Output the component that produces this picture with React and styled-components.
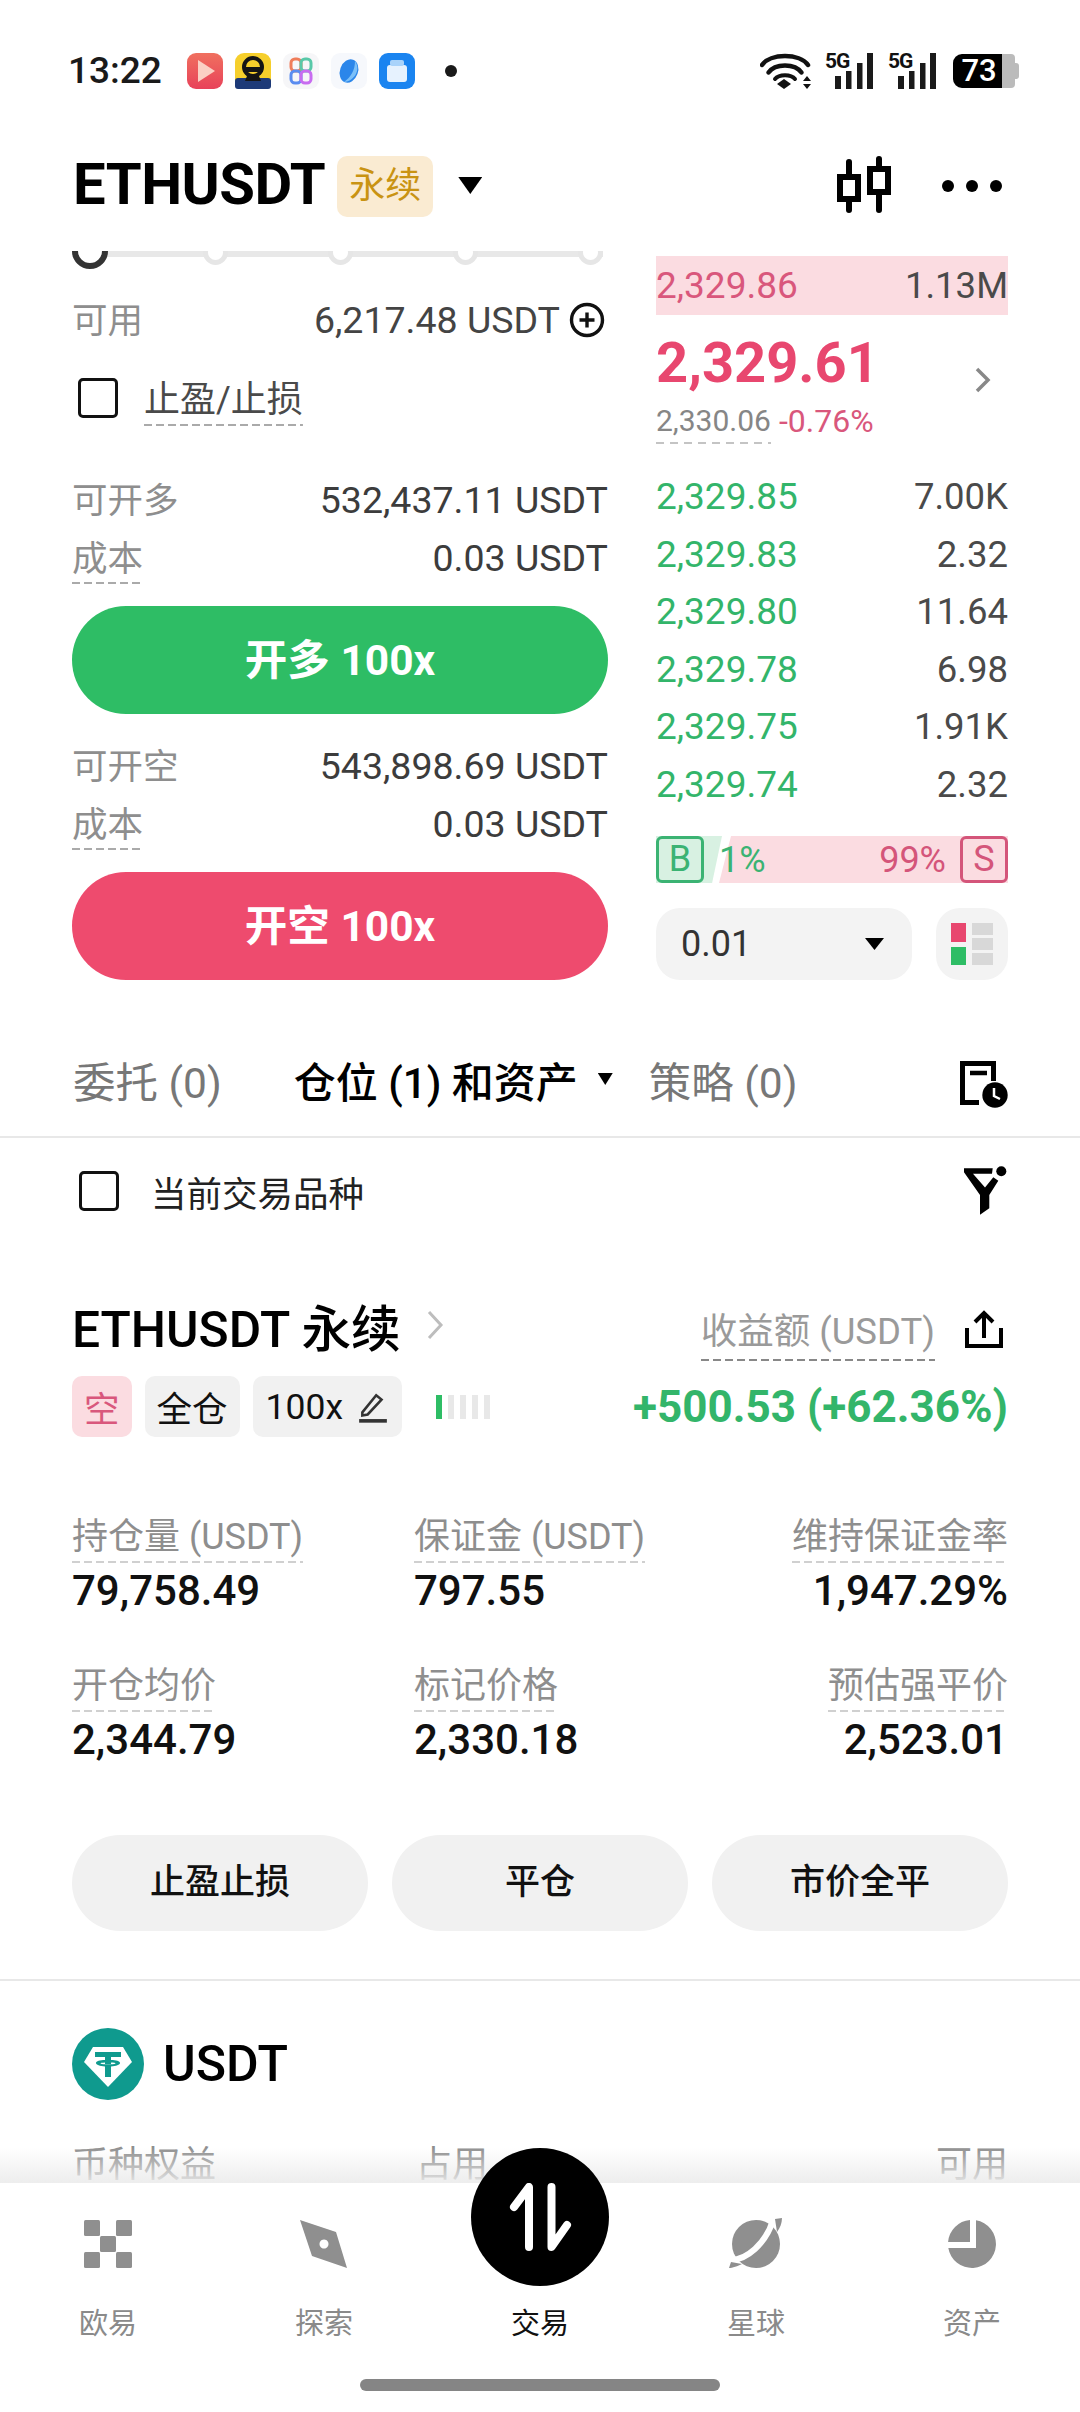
import React from 'react'
import styled, { createGlobalStyle } from 'styled-components'

const RED = '#e8476f'
const GREEN = '#33b56a'

const bids = [
  ['2,329.85', '7.00K'],
  ['2,329.83', '2.32'],
  ['2,329.80', '11.64'],
  ['2,329.78', '6.98'],
  ['2,329.75', '1.91K'],
  ['2,329.74', '2.32']
]

const stats = [
  ['持仓量 (USDT)', '79,758.49'],
  ['保证金 (USDT)', '797.55'],
  ['维持保证金率', '1,947.29%'],
  ['开仓均价', '2,344.79'],
  ['标记价格', '2,330.18'],
  ['预估强平价', '2,523.01']
]

const AppIcons = () => (
  <>
    <svg width="36" height="36" viewBox="0 0 36 36">
      <defs>
        <linearGradient id="play" x1="0" y1="0" x2="0" y2="1">
          <stop offset="0" stopColor="#f0705f" />
          <stop offset="1" stopColor="#e8425a" />
        </linearGradient>
      </defs>
      <rect width="36" height="36" rx="9" fill="url(#play)" />
      <path d="M11 7 L28 18 L11 29 Z" fill="#fbd0c4" />
    </svg>
    <svg width="36" height="36" viewBox="0 0 36 36">
      <rect width="36" height="36" rx="9" fill="#f6cf2c" />
      <rect y="25" width="36" height="11" rx="3" fill="#1d3a78" />
      <circle cx="18" cy="14" r="9" fill="none" stroke="#151515" strokeWidth="4" />
      <rect x="8" y="14" width="20" height="5" fill="#151515" />
      <path d="M10 28 L26 28 L24 23 L12 23 Z" fill="#151515" />
    </svg>
    <svg width="36" height="36" viewBox="0 0 36 36">
      <rect width="36" height="36" rx="9" fill="#f6f6f8" />
      <rect x="8" y="6" width="10" height="12" rx="4" fill="none" stroke="#ef7d5a" strokeWidth="3" />
      <rect x="18" y="6" width="10" height="12" rx="4" fill="none" stroke="#58c8a8" strokeWidth="3" />
      <rect x="8" y="18" width="10" height="12" rx="4" fill="none" stroke="#5a8cf0" strokeWidth="3" />
      <rect x="18" y="18" width="10" height="12" rx="4" fill="none" stroke="#c86cf0" strokeWidth="3" />
    </svg>
    <svg width="36" height="36" viewBox="0 0 36 36">
      <rect width="36" height="36" rx="9" fill="#f6f8fc" />
      <ellipse cx="18" cy="18" rx="9" ry="12" transform="rotate(20 18 18)" fill="#2b86ea" />
      <path d="M24 8 C30 16 24 28 13 29 C20 24 24 17 24 8 Z" fill="#7cc0f8" />
    </svg>
    <svg width="36" height="36" viewBox="0 0 36 36">
      <rect width="36" height="36" rx="9" fill="#1a84f0" />
      <rect x="8" y="12" width="20" height="17" rx="3" fill="#e6f2fe" />
      <rect x="11" y="7" width="14" height="6" rx="2" fill="#a9d3fa" />
    </svg>
  </>
)

const Signal = () => (
  <SignalWrap>
    <SignalLabel>5G</SignalLabel>
    <svg width="38" height="36" viewBox="0 0 38 36">
      <path d="M0 23h6v13H0zM11 18h5.500v18H11zM22 10h5.500v26H22zM32 0h6v36h-6z" fill="#1a1a1a" />
    </svg>
  </SignalWrap>
)

const CandleIcon = () => (
  <svg width="56" height="58" viewBox="0 0 56 58" fill="none" stroke="#000" strokeWidth="6" strokeLinecap="round">
    <path d="M13 7V19M13 47V55M43 4V11M43 40V55" />
    <path d="M4 22H22V44H4ZM34 14H52V37H34Z" strokeLinecap="butt" />
  </svg>
)

const ArrowsIcon = () => (
  <svg width="64" height="68" viewBox="0 0 64 68" fill="none" stroke="#fff" strokeWidth="8" strokeLinecap="round">
    <path d="M6 24 L21 4 V64" strokeLinejoin="round" />
    <path d="M43.500 4 V64 L59 42" strokeLinejoin="round" />
  </svg>
)

const navIcons = {
  home: (
    <svg width="48" height="48" viewBox="0 0 48 48" fill="#8f8f8f">
      <rect x="0" y="0" width="16" height="16" rx="1.5" />
      <rect x="32" y="0" width="16" height="16" rx="1.5" />
      <rect x="16" y="16" width="16" height="16" rx="1.5" />
      <rect x="0" y="32" width="16" height="16" rx="1.5" />
      <rect x="32" y="32" width="16" height="16" rx="1.5" />
    </svg>
  ),
  explore: (
    <svg width="48" height="48" viewBox="0 0 48 48">
      <path fillRule="evenodd" d="M0 0 L36 12 L47 48 L12 36 Z M24 19.500 a4.500 4.500 0 1 0 0.010 0 Z" fill="#8f8f8f" />
    </svg>
  ),
  planet: (
    <svg width="60" height="60" viewBox="0 0 60 60">
      <circle cx="30" cy="30" r="24" fill="#8f8f8f" />
      <path d="M5 46 C20 46 40 30 47 6" fill="none" stroke="#fff" strokeWidth="6" />
      <path d="M3 54 C6 54 12 52 16 50 L5 48 Z" fill="#8f8f8f" />
      <path d="M49 5 L56 4 C56 9 54 14 51 18 Z" fill="#8f8f8f" />
    </svg>
  ),
  assets: (
    <svg width="48" height="48" viewBox="0 0 48 48" fill="#8f8f8f">
      <path d="M22 0.100 V22 H0.100 A24 24 0 0 1 22 0.100 Z" />
      <path d="M28 0.300 A24 24 0 1 1 0.300 28 H28 Z" />
    </svg>
  )
}

const navItems = [
  ['欧易', 'home'],
  ['探索', 'explore'],
  ['交易', null],
  ['星球', 'planet'],
  ['资产', 'assets']
]

const App = () => (
  <Page>
    <GlobalStyle />
    <StatusBar>
      <Time>13:22</Time>
      <AppIcons />
      <StatusDot />
      <StatusRight>
        <WifiIcon width="52" height="38" viewBox="0 0 52 38" fill="none" stroke="#111" strokeLinecap="round">
          <path d="M2 13 C10 1 40 1 48 13" strokeWidth="4.500" />
          <path d="M8.500 20.500 C15 11 35 11 41.500 20.500" strokeWidth="4.500" />
          <path d="M15 27 C19 22 31 22 35 27" strokeWidth="4" />
          <path d="M24 27 L31 32 L24 37 L17 32 Z" fill="#111" stroke="none" />
          <path d="M47 24 L51 29 H43 Z M43 32 H51 L47 37 Z" fill="#111" stroke="none" />
        </WifiIcon>
        <Signal />
        <Signal />
        <Battery>
          <BatteryLevel>73</BatteryLevel>
        </Battery>
      </StatusRight>
    </StatusBar>

    <Header>
      <Symbol>ETHUSDT</Symbol>
      <SymbolTag>永续</SymbolTag>
      <HeaderCaret $w={24} $h={17} />
      <HeaderActions>
        <CandleIcon />
        <Dots>
          <i />
          <i />
          <i />
        </Dots>
      </HeaderActions>
    </Header>

    <Trade>
      <OrderForm>
        <SliderClip>
          <Knob $active />
          <Knob />
          <Knob />
          <Knob />
          <Knob />
        </SliderClip>
        <FormRow $top={22}>
          <Muted>可用</Muted>
          <Available>
            6,217.48 USDT
            <svg width="36" height="36" viewBox="0 0 36 36" fill="none" stroke="#111" strokeWidth="3.4">
              <circle cx="18" cy="18" r="15.5" />
              <path d="M18 10.5v15M10.5 18h15" />
            </svg>
          </Available>
        </FormRow>
        <CheckRow $top={22}>
          <Check />
          <Dashed $color="#4a4a4a">止盈/止损</Dashed>
        </CheckRow>
        <FormRow $top={49} $h={50}>
          <Muted>可开多</Muted>
          <Amount>532,437.11 USDT</Amount>
        </FormRow>
        <FormRow $top={8} $h={50}>
          <Muted><Dashed>成本</Dashed></Muted>
          <Amount>0.03 USDT</Amount>
        </FormRow>
        <OrderButton $color="#2ebd65">开多 100x</OrderButton>
        <FormRow $top={27} $h={50}>
          <Muted>可开空</Muted>
          <Amount>543,898.69 USDT</Amount>
        </FormRow>
        <FormRow $top={8} $h={50}>
          <Muted><Dashed>成本</Dashed></Muted>
          <Amount>0.03 USDT</Amount>
        </FormRow>
        <OrderButton $color="#ee4b6e">开空 100x</OrderButton>
      </OrderForm>

      <Book>
        <AskRow>
          <BookPrice $color="#d9577c">2,329.86</BookPrice>
          <BookSize>1.13M</BookSize>
        </AskRow>
        <LastRow>
          <div>
            <LastPrice>2,329.61</LastPrice>
            <SubRow>
              <IndexPrice>2,330.06</IndexPrice>
              <Change>-0.76%</Change>
            </SubRow>
          </div>
          <LastChevron width="16" height="26" viewBox="0 0 16 26" fill="none" stroke="#888" strokeWidth="3.5">
            <path d="M2 2 L13 13 L2 24" />
          </LastChevron>
        </LastRow>
        <Bids>
          {bids.map(([price, size], i) => (
            <BidRow key={i}>
              <BookPrice $color={GREEN}>{price}</BookPrice>
              <BookSize>{size}</BookSize>
            </BidRow>
          ))}
        </Bids>
        <Ratio>
          <BuyBar />
          <SellBar />
          <SideBox $color="#3bb373">B</SideBox>
          <BuyPct>1%</BuyPct>
          <SellPct>99%</SellPct>
          <SideBox $color="#d4557a">S</SideBox>
        </Ratio>
        <BookControls>
          <DepthSelect>
            0.01
            <Caret $w={19} $h={12} />
          </DepthSelect>
          <LayoutButton>
            <svg width="42" height="42" viewBox="0 0 42 42">
              <rect x="0" y="0" width="15" height="19" fill={RED} />
              <rect x="0" y="24" width="15" height="18" fill="#2ebd65" />
              <rect x="21" y="0" width="21" height="12" fill="#d8d8d8" />
              <rect x="21" y="15" width="21" height="12" fill="#d8d8d8" />
              <rect x="21" y="30" width="21" height="12" fill="#d8d8d8" />
            </svg>
          </LayoutButton>
        </BookControls>
      </Book>
    </Trade>

    <Tabs>
      <Tab>委托 (0)</Tab>
      <Tab $active>
        仓位 (1) 和资产
        <Caret $w={15} $h={12} />
      </Tab>
      <Tab>策略 (0)</Tab>
      <TabIcon>
        <svg width="52" height="50" viewBox="0 0 52 50" fill="none" stroke="#000" strokeWidth="5">
          <path d="M21 43.500 H4.500 V4.500 H35.500 V22" />
          <path d="M12 14 H29" strokeWidth="4.500" />
          <circle cx="37" cy="36" r="12.700" fill="#000" stroke="none" />
          <path d="M36 29 V37 L42 40" stroke="#fff" strokeWidth="2.500" />
        </svg>
      </TabIcon>
    </Tabs>

    <FilterRow>
      <Check />
      <FilterLabel>当前交易品种</FilterLabel>
      <FilterIcon>
        <svg width="46" height="54" viewBox="0 0 46 54" fill="#000">
          <path d="M2 4.300 H30.700 L30 9.700 H11 L23 23.500 L31.300 13.300 L36.300 16.700 L27.300 31 V44.300 L18 50.700 V31 L2 8.300 Z" />
          <circle cx="39.300" cy="7.300" r="5" />
        </svg>
      </FilterIcon>
    </FilterRow>

    <Position>
      <PositionHead>
        <PositionName>ETHUSDT 永续</PositionName>
        <svg width="18" height="30" viewBox="0 0 18 30" fill="none" stroke="#bdbdbd" strokeWidth="3">
          <path d="M3 2 L15 15 L3 28" />
        </svg>
        <PnlLabel>收益额 (USDT)</PnlLabel>
        <ShareIcon width="38" height="38" viewBox="0 0 38 38" fill="none" stroke="#000" strokeWidth="4">
          <path d="M2 18 V36 H36 V18" />
          <path d="M19 28 V3 M10 12 L19 3 L28 12" />
        </ShareIcon>
      </PositionHead>
      <TagRow>
        <PosTag $danger>空</PosTag>
        <PosTag>全仓</PosTag>
        <PosTag $wide>
          100x
          <svg width="32" height="32" viewBox="0 0 30 30" fill="none" stroke="#333" strokeWidth="2.4">
            <path d="M5 20 L18 4 L23 8 L10 22 L5 23 Z" />
            <path d="M2 28 H28" strokeWidth="3.4" />
          </svg>
        </PosTag>
        <RiskBars>
          <RiskBar $on />
          <RiskBar />
          <RiskBar />
          <RiskBar />
          <RiskBar />
        </RiskBars>
        <Pnl>+500.53 (+62.36%)</Pnl>
      </TagRow>
      <StatGrid>
        {stats.map(([label, value], i) => (
          <Stat key={label} $right={i % 3 === 2}>
            <StatLabel>{label}</StatLabel>
            <StatValue>{value}</StatValue>
          </Stat>
        ))}
      </StatGrid>
      <Actions>
        <ActionButton>止盈止损</ActionButton>
        <ActionButton>平仓</ActionButton>
        <ActionButton>市价全平</ActionButton>
      </Actions>
    </Position>

    <Asset>
      <AssetHead>
        <svg width="72" height="72" viewBox="0 0 72 72">
          <circle cx="36" cy="36" r="36" fill="#0f9a8e" />
          <path d="M21 19 H51 L60 34 L36 59 L12 34 Z" fill="#fff" />
          <path d="M23 24 H49 V29 H39 V32 C44 32 48 33 48 35 C48 37 44 38 39 38.5 V49 H33 V38.5 C28 38 24 37 24 35 C24 33 28 32 33 32 V29 H23 Z M33 34.5 C30 34.7 28.5 35 28.5 35.4 C29.5 36 33 36.3 36 36.3 C39 36.3 42.500 36 43.500 35.400 C43.500 35 42 34.700 39 34.500 V36 H33 Z" fill="#0f9a8e" fillRule="evenodd" />
        </svg>
        <AssetName>USDT</AssetName>
      </AssetHead>
      <AssetCols>
        <span>币种权益</span>
        <span>占用</span>
        <span>可用</span>
      </AssetCols>
    </Asset>

    <Nav>
      <NavFade />
      <TradeFab>
        <ArrowsIcon />
      </TradeFab>
      {navItems.map(([label, icon]) => (
        <NavItem key={label} $active={!icon}>
          <NavIcon>{icon && navIcons[icon]}</NavIcon>
          {label}
        </NavItem>
      ))}
      <HomeBar />
    </Nav>
  </Page>
)

const GlobalStyle = createGlobalStyle`
  html, body {
    margin: 0;
    padding: 0;
    background: #fff;
  }
  * {
    box-sizing: border-box;
  }
`

const Page = styled.div`
  position: relative;
  width: 1080px;
  height: 2412px;
  overflow: hidden;
  background: #fff;
  color: #000;
  font-family: Roboto, 'Noto Sans CJK SC', sans-serif;
`

const StatusBar = styled.div`
  height: 140px;
  padding: 53px 61px 0 68px;
  display: flex;
  align-items: flex-start;
  gap: 12px;
`

const Time = styled.div`
  width: 107px;
  font-size: 37px;
  line-height: 36px;
  font-weight: 500;
  color: #1a1a1a;
`

const StatusDot = styled.div`
  width: 12px;
  height: 12px;
  margin: 12px 0 0 18px;
  border-radius: 50%;
  background: #1a1a1a;
`

const StatusRight = styled.div`
  margin: -1px 0 0 auto;
  display: flex;
  align-items: center;
  gap: 15px;
`

const WifiIcon = styled.svg`
  margin-right: -2px;
`

const SignalWrap = styled.div`
  position: relative;
  width: 48px;
  height: 36px;
  display: flex;
  justify-content: flex-end;
`

const SignalLabel = styled.span`
  position: absolute;
  left: 0;
  top: -3px;
  font-size: 21px;
  line-height: 22px;
  font-weight: 700;
  letter-spacing: -1px;
  color: #111;
`

const Battery = styled.div`
  position: relative;
  width: 62px;
  height: 34px;
  margin: 0 4px 0 2px;
  border-radius: 9px 4px 4px 9px;
  background: linear-gradient(90deg, #000 0 49px, #bbb 49px);
  &::after {
    content: '';
    position: absolute;
    right: -4px;
    top: 9px;
    width: 4px;
    height: 16px;
    border-radius: 0 3px 3px 0;
    background: #bbb;
  }
`

const BatteryLevel = styled.div`
  width: 49px;
  padding-left: 3px;
  text-align: center;
  font-size: 31px;
  line-height: 34px;
  font-weight: 500;
  color: #fff;
`

const Header = styled.div`
  height: 110px;
  padding: 0 78px 0 73px;
  display: flex;
  align-items: flex-start;
`

const Symbol = styled.div`
  margin-top: 11px;
  font-size: 58px;
  line-height: 66px;
  font-weight: 700;
  letter-spacing: -0.5px;
`

const SymbolTag = styled.div`
  width: 96px;
  height: 61px;
  margin: 16px 0 0 12px;
  border-radius: 10px;
  background: #faebd2;
  color: #c99312;
  font-size: 36px;
  line-height: 61px;
  text-align: center;
`

const Caret = styled.span`
  display: inline-block;
  width: ${p => p.$w}px;
  height: ${p => p.$h}px;
  background: #000;
  clip-path: polygon(0 0, 100% 0, 50% 100%);
`

const HeaderCaret = styled(Caret)`
  margin: 37px 0 0 25px;
`

const HeaderActions = styled.div`
  margin: 15px 0 0 auto;
  display: flex;
  align-items: center;
  gap: 50px;
`

const Dots = styled.div`
  display: flex;
  gap: 12px;
  margin-top: 4px;
  i {
    width: 12px;
    height: 12px;
    border-radius: 50%;
    background: #000;
  }
`

const Trade = styled.div`
  padding: 0 72px;
  display: grid;
  grid-template-columns: 536px 352px;
  column-gap: 48px;
`

const OrderForm = styled.div`
  display: flex;
  flex-direction: column;
`

const SliderClip = styled.div`
  height: 19px;
  margin: 1px 5.500px 0 0;
  overflow: hidden;
  display: flex;
  justify-content: space-between;
  align-items: flex-start;
  background: linear-gradient(#e8e8e8, #e8e8e8) no-repeat 0 0 / 100% 6px;
`

const Knob = styled.span`
  flex: none;
  width: ${p => (p.$active ? 36 : 25)}px;
  height: ${p => (p.$active ? 36 : 25)}px;
  margin-top: ${p => (p.$active ? -18 : -11)}px;
  margin-right: ${p => (p.$active ? -5.5 : 0)}px;
  border-radius: 50%;
  background: #fff;
  border: ${p => (p.$active ? '6px solid #333' : '5px solid #e6e6e6')};
`

const FormRow = styled.div`
  height: ${p => p.$h || 56}px;
  margin-top: ${p => p.$top}px;
  display: flex;
  justify-content: space-between;
  align-items: center;
`

const Muted = styled.span`
  padding-bottom: 6px;
  font-size: 35.500px;
  color: #8e8e8e;
`

const Available = styled.span`
  display: flex;
  align-items: center;
  gap: 9px;
  margin-right: 3px;
  font-size: 37.500px;
  color: #444;
`

const Amount = styled.span`
  font-size: 37.500px;
  color: #3c3c3c;
`

const CheckRow = styled(FormRow)`
  justify-content: flex-start;
  gap: 26px;
  padding-left: 6px;
  font-size: 36px;
`

const Check = styled.span`
  width: 40px;
  height: 40px;
  border: 3.5px solid #111;
  border-radius: 5px;
  flex: none;
`

const Dashed = styled.span`
  color: ${p => p.$color || 'inherit'};
  padding-bottom: 4px;
  background: repeating-linear-gradient(90deg, #aaa 0 8px, transparent 8px 12px) no-repeat bottom / 100% 2px;
`

const OrderButton = styled.div`
  height: 108px;
  margin-top: 23px;
  border-radius: 54px;
  background: ${p => p.$color};
  color: #fff;
  font-size: 42.500px;
  font-weight: 700;
  line-height: 110px;
  text-align: center;
`

const Book = styled.div`
  display: flex;
  flex-direction: column;
`

const AskRow = styled.div`
  height: 59px;
  margin-top: 6px;
  display: flex;
  justify-content: space-between;
  align-items: center;
  background: #fbdce1;
`

const BookPrice = styled.span`
  font-size: 37px;
  color: ${p => p.$color};
`

const BookSize = styled.span`
  font-size: 36.500px;
  color: #4a4a4a;
`

const LastRow = styled.div`
  height: 153px;
  padding: 15px 17px 0 0;
  display: flex;
  justify-content: space-between;
  align-items: flex-start;
`

const LastChevron = styled.svg`
  margin-top: 37px;
`

const LastPrice = styled.div`
  font-size: 56px;
  line-height: 66px;
  font-weight: 700;
  color: ${RED};
`

const SubRow = styled.div`
  margin-top: 6px;
  display: flex;
  gap: 8px;
  font-size: 30px;
  line-height: 38px;
`

const IndexPrice = styled.span`
  color: #868686;
  background: repeating-linear-gradient(90deg, #c4c4c4 0 8px, transparent 8px 14px) no-repeat bottom / 100% 2px;
  padding-bottom: 4px;
`

const Change = styled.span`
  font-size: 32px;
  color: #d9577c;
`

const Bids = styled.div`
  display: flex;
  flex-direction: column;
`

const BidRow = styled.div`
  height: 57.5px;
  display: flex;
  justify-content: space-between;
  align-items: center;
`

const Ratio = styled.div`
  position: relative;
  height: 47px;
  margin-top: 23px;
  display: flex;
  align-items: center;
  font-size: 36px;
`

const BuyBar = styled.span`
  position: absolute;
  left: 0;
  top: 0;
  bottom: 0;
  width: 66px;
  background: #d8f1e2;
  clip-path: polygon(0 0, 100% 0, 85% 100%, 0 100%);
`

const SellBar = styled.span`
  position: absolute;
  left: 63px;
  right: 0;
  top: 0;
  bottom: 0;
  background: #fbdce1;
  clip-path: polygon(12px 0, 100% 0, 100% 100%, 0 100%);
`

const SideBox = styled.span`
  position: relative;
  width: 48px;
  height: 47px;
  border: 3px solid ${p => p.$color};
  border-radius: 6px;
  color: ${p => p.$color};
  line-height: 41px;
  text-align: center;
`

const BuyPct = styled.span`
  position: relative;
  margin-left: 15px;
  color: #3bb373;
`

const SellPct = styled.span`
  position: relative;
  margin-left: auto;
  margin-right: 14px;
  color: #d4557a;
`

const BookControls = styled.div`
  margin-top: 25px;
  display: flex;
  justify-content: space-between;
`

const DepthSelect = styled.div`
  width: 256px;
  height: 72px;
  padding: 0 28px 0 25px;
  border-radius: 24px;
  background: #f3f3f3;
  display: flex;
  justify-content: space-between;
  align-items: center;
  font-size: 36px;
  color: #333;
`

const LayoutButton = styled.div`
  width: 72px;
  height: 72px;
  border-radius: 24px;
  background: #f3f3f3;
  display: grid;
  place-items: center;
`

const Tabs = styled.div`
  height: 158px;
  padding: 42px 70px 0 73px;
  display: flex;
  align-items: center;
  border-bottom: 2px solid #e8e8e8;
`

const Tab = styled.div`
  display: flex;
  align-items: center;
  gap: ${p => (p.$active ? 20 : 0)}px;
  margin-right: ${p => (p.$active ? 36 : 72)}px;
  font-size: ${p => (p.$active ? 42 : 42.5)}px;
  font-weight: ${p => (p.$active ? 500 : 400)};
  color: ${p => (p.$active ? '#000' : '#777')};
`

const TabIcon = styled.div`
  margin: 10px 0 0 auto;
  height: 50px;
`

const FilterRow = styled.div`
  height: 106px;
  padding: 0 72px 0 79px;
  display: flex;
  align-items: center;
  gap: 32px;
`

const FilterLabel = styled.span`
  font-size: 35.500px;
  color: #222;
`

const FilterIcon = styled.div`
  margin-left: auto;
  height: 54px;
`

const Position = styled.div`
  padding: 51px 72px 48px;
  border-bottom: 2px solid #e8e8e8;
`

const PositionHead = styled.div`
  height: 60px;
  display: flex;
  align-items: center;
`

const PositionName = styled.div`
  font-size: 49.700px;
  font-weight: 500;
  margin-right: 25px;
`

const PnlLabel = styled.span`
  margin: 13px 30px 0 auto;
  padding-bottom: 6px;
  font-size: 36.500px;
  color: #9a9a9a;
  background: repeating-linear-gradient(90deg, #888 0 8px, transparent 8px 12px) no-repeat bottom / 100% 2px;
`

const ShareIcon = styled.svg`
  margin: 8px 5px 0 0;
`

const TagRow = styled.div`
  height: 63px;
  margin-top: 20px;
  display: flex;
  align-items: center;
  gap: 13px;
`

const PosTag = styled.span`
  height: 61px;
  padding: 0 ${p => (p.$wide ? 13 : 12)}px;
  border-radius: 10px;
  display: flex;
  align-items: center;
  gap: 14px;
  font-size: 35.500px;
  background: ${p => (p.$danger ? '#fbdce1' : '#f1f1f1')};
  color: ${p => (p.$danger ? '#d9577c' : '#111')};
`

const RiskBars = styled.div`
  display: flex;
  gap: 6px;
  margin-left: 21px;
`

const RiskBar = styled.span`
  width: 6px;
  height: 24px;
  background: ${p => (p.$on ? '#2ebd65' : '#e8e8e8')};
`

const Pnl = styled.div`
  margin-left: auto;
  font-size: 44px;
  font-weight: 700;
  color: ${GREEN};
`

const StatGrid = styled.div`
  margin-top: 76px;
  display: grid;
  grid-template-columns: 342px 1fr 1fr;
  row-gap: 47px;
`

const Stat = styled.div`
  display: flex;
  flex-direction: column;
  align-items: ${p => (p.$right ? 'flex-end' : 'flex-start')};
`

const StatLabel = styled.span`
  padding-bottom: 3px;
  font-size: 36px;
  line-height: 46px;
  color: #8e8e8e;
  background: repeating-linear-gradient(90deg, #d0d0d0 0 8px, transparent 8px 12px) no-repeat bottom / 100% 2px;
`

const StatValue = styled.span`
  margin-top: 3px;
  font-size: 42px;
  line-height: 50px;
  font-weight: 500;
  color: #111;
`

const Actions = styled.div`
  margin-top: 70px;
  display: grid;
  grid-template-columns: repeat(3, 1fr);
  gap: 24px;
`

const ActionButton = styled.div`
  height: 96px;
  border-radius: 48px;
  background: #f1f1f1;
  font-size: 35px;
  font-weight: 500;
  color: #111;
  line-height: 96px;
  text-align: center;
`

const Asset = styled.div`
  padding: 47px 72px 0;
`

const AssetHead = styled.div`
  display: flex;
  align-items: center;
  gap: 19px;
`

const AssetName = styled.div`
  font-size: 50px;
  font-weight: 500;
`

const AssetCols = styled.div`
  margin-top: 35px;
  display: grid;
  grid-template-columns: 344px 1fr auto;
  font-size: 36px;
  color: #8e8e8e;
`

const Nav = styled.div`
  position: absolute;
  left: 0;
  right: 0;
  bottom: 0;
  height: 229px;
  padding-top: 37px;
  background: #fff;
  display: grid;
  grid-template-columns: repeat(5, 1fr);
  align-items: start;
`

const NavFade = styled.div`
  position: absolute;
  left: 0;
  right: 0;
  top: -36px;
  height: 36px;
  background: linear-gradient(rgba(235, 235, 235, 0), rgba(235, 235, 235, 0.9));
`

const TradeFab = styled.div`
  position: absolute;
  left: 471px;
  top: -35px;
  width: 138px;
  height: 138px;
  border-radius: 50%;
  background: #000;
  display: grid;
  place-items: center;
`

const NavItem = styled.div`
  display: flex;
  flex-direction: column;
  align-items: center;
  font-size: 29px;
  line-height: 36px;
  color: ${p => (p.$active ? '#111' : '#8a8a8a')};
`

const NavIcon = styled.div`
  height: 48px;
  margin-bottom: 38px;
  display: flex;
  align-items: center;
  justify-content: center;
`

const HomeBar = styled.div`
  position: absolute;
  left: 360px;
  bottom: 21px;
  width: 360px;
  height: 12px;
  border-radius: 6px;
  background: #858585;
`

export default App
